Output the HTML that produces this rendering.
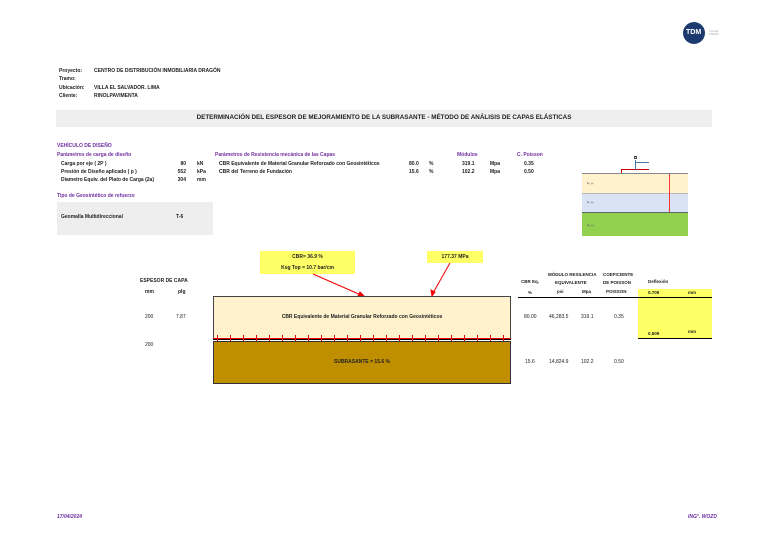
<!DOCTYPE html>
<html><head><meta charset="utf-8"><style>
*{margin:0;padding:0;box-sizing:border-box}
body{width:768px;height:543px;background:#fff;position:relative;overflow:hidden;font-family:"Liberation Sans",sans-serif;font-size:5px;color:#222}
div,span{position:absolute;white-space:nowrap}
.b{font-weight:bold}
.p{color:#7030a0;font-weight:bold}
.g{color:#555}
</style></head><body>
<div style="left:683px;top:22px;width:22px;height:22px;border-radius:50%;background:#1d3a6e"></div>
<div style="left:686px;top:29px;color:#fff;font-size:7px;font-weight:bold">TDM</div>
<div style="left:709px;top:30px;color:#aaa;font-size:2.5px">TALLER<br>DISEÑO</div>

<div class="b" style="left:59px;top:68px">Proyecto:</div>
<div class="b" style="left:94px;top:68px">CENTRO DE DISTRIBUCIÓN INMOBILIARIA DRAGÓN</div>
<div class="b" style="left:59px;top:76px">Tramo:</div>
<div class="b" style="left:59px;top:85px">Ubicación:</div>
<div class="b" style="left:94px;top:85px">VILLA EL SALVADOR. LIMA</div>
<div class="b" style="left:59px;top:93px">Cliente:</div>
<div class="b" style="left:94px;top:93px">RINOLPAVIMENTA</div>

<div style="left:56px;top:110px;width:656px;height:17px;background:#efefef"></div>
<div class="b" style="left:56px;top:114px;width:656px;text-align:center;font-size:6.3px">DETERMINACIÓN DEL ESPESOR DE MEJORAMIENTO DE LA SUBRASANTE - MÉTODO DE ANÁLISIS DE CAPAS ELÁSTICAS</div>

<div class="p" style="left:57px;top:143px">VEHÍCULO DE DISEÑO</div>
<div class="p" style="left:57px;top:152px">Parámetros de carga de diseño</div>
<div class="b" style="left:61px;top:161px">Carga por eje ( 2P )</div>
<div class="b" style="left:61px;top:169px">Presión de Diseño aplicado ( p )</div>
<div class="b" style="left:61px;top:177px">Diametro Equiv. del Plato de Carga (2a)</div>
<div class="b" style="left:170px;top:161px;width:16px;text-align:right">80</div>
<div class="b" style="left:170px;top:169px;width:16px;text-align:right">552</div>
<div class="b" style="left:170px;top:177px;width:16px;text-align:right">304</div>
<div class="b" style="left:197px;top:161px">kN</div>
<div class="b" style="left:197px;top:169px">kPa</div>
<div class="b" style="left:197px;top:177px">mm</div>
<div class="p" style="left:57px;top:193px">Tipo de Geosintético de refuerzo</div>
<div style="left:57px;top:202px;width:156px;height:33px;background:#eeeeee"></div>
<div class="b" style="left:61px;top:214px">Geomalla Multidireccional</div>
<div class="b" style="left:176px;top:214px">T-6</div>

<div class="p" style="left:215px;top:152px">Parámetros de Resistencia mecánica de las Capas</div>
<div class="b" style="left:219px;top:161px">CBR Equivalente de Material Granular Reforzado con Geosintéticos</div>
<div class="b" style="left:219px;top:169px">CBR del Terreno de Fundación</div>
<div class="b" style="left:409px;top:161px">80.0</div><div class="b" style="left:429px;top:161px">%</div>
<div class="b" style="left:409px;top:169px">15.6</div><div class="b" style="left:429px;top:169px">%</div>
<div class="p" style="left:457px;top:152px">Módulos</div>
<div class="b" style="left:462px;top:161px">319.1</div><div class="b" style="left:490px;top:161px">Mpa</div>
<div class="b" style="left:462px;top:169px">102.2</div><div class="b" style="left:490px;top:169px">Mpa</div>
<div class="p" style="left:517px;top:152px">C. Poisson</div>
<div class="b" style="left:524px;top:161px">0.35</div>
<div class="b" style="left:524px;top:169px">0.50</div>

<div style="left:582px;top:173px;width:106px;height:1px;background:#888"></div>
<div style="left:582px;top:174px;width:106px;height:19px;background:#fff2cc"></div>
<div style="left:582px;top:193px;width:106px;height:1px;background:#bbb"></div>
<div style="left:582px;top:194px;width:106px;height:18px;background:#dae3f3"></div>
<div style="left:582px;top:212px;width:106px;height:1px;background:#666"></div>
<div style="left:582px;top:213px;width:106px;height:23px;background:#92d050"></div>
<div style="left:621px;top:169px;width:28px;height:4px;border-top:1px solid #c00;border-left:1px dashed #c00"></div>
<div style="left:634px;top:156px;width:3px;height:3px;border:1px solid #444"></div>
<div style="left:635px;top:160px;width:1px;height:10px;background:#47a"></div>
<div style="left:636px;top:162px;width:13px;height:1px;background:#47a"></div>
<div style="left:669px;top:174px;width:1px;height:38px;background:#f33"></div>
<div class="g" style="left:587px;top:181px;font-size:3px">E₁ μ₁</div>
<div class="g" style="left:587px;top:200px;font-size:3px">E₂ μ₂</div>
<div class="g" style="left:587px;top:223px;font-size:3px">E₃ μ₃</div>

<div style="left:260px;top:251px;width:95px;height:23px;background:#ffff66"></div>
<div class="b" style="left:260px;top:254px;width:95px;text-align:center">CBR= 36.9 %</div>
<div class="b" style="left:260px;top:265px;width:95px;text-align:center">Ksg Top = 10.7 bar/cm</div>
<div style="left:427px;top:251px;width:56px;height:12px;background:#ffff66"></div>
<div class="b" style="left:427px;top:254px;width:56px;text-align:center">177.37 MPa</div>
<svg style="position:absolute;left:0;top:0" width="768" height="543">
<g stroke="#e00" stroke-width="1" fill="#e00">
<line x1="313" y1="274" x2="361" y2="295"/><polygon points="364,296 358,296 360,292"/>
<line x1="450" y1="263" x2="433" y2="293"/><polygon points="432,296 431,290 435,292"/>
</g>
</svg>

<div class="b" style="left:140px;top:278px">ESPESOR DE CAPA</div>
<div class="b" style="left:145px;top:289px">mm</div>
<div class="b" style="left:178px;top:289px">plg</div>
<div style="left:145px;top:314px">200</div>
<div style="left:176px;top:314px">7.87</div>
<div style="left:145px;top:342px">200</div>

<div style="left:213px;top:296px;width:298px;height:43px;background:#fff2cc;border:1px solid #444"></div>
<div class="b" style="left:213px;top:314px;width:298px;text-align:center">CBR Equivalente de Material Granular Reforzado con Geosintéticos</div>
<div style="left:213px;top:338px;width:298px;height:2px;background:#e00;border-bottom:1px solid #000"></div>
<div style="left:214px;top:335px;width:297px;height:8px;background:repeating-linear-gradient(90deg,transparent 0 3px,#e00 3px 4px,transparent 4px 13px)"></div>
<div style="left:213px;top:341px;width:298px;height:43px;background:#bf8f00;border:1px solid #333"></div>
<div class="b" style="left:213px;top:359px;width:298px;text-align:center">SUBRASANTE = 15.6 %</div>

<div class="b" style="left:521px;top:279px;font-size:4.5px">CBR Eq.</div>
<div class="b" style="left:528px;top:290px;font-size:4.5px">%</div>
<div class="b" style="left:548px;top:272px;font-size:4.5px">MÓDULO RESILENCIA</div>
<div class="b" style="left:555px;top:280px;font-size:4.5px">EQUIVALENTE</div>
<div class="b" style="left:557px;top:289px;font-size:4.5px">psi</div>
<div class="b" style="left:582px;top:289px;font-size:4.5px">Mpa</div>
<div class="b" style="left:603px;top:272px;font-size:4.5px">COEFICIENTE</div>
<div class="b" style="left:603px;top:280px;font-size:4.5px">DE POISSON</div>
<div class="b" style="left:606px;top:289px;font-size:4.5px">POISSON</div>
<div class="b" style="left:648px;top:279px;font-size:4.5px">Deflexión</div>
<div style="left:638px;top:289px;width:74px;height:49px;background:#ffff66"></div>
<div class="b" style="left:648px;top:290px;font-size:4.5px">0.709</div>
<div class="b" style="left:688px;top:290px;font-size:4.5px">mm</div>
<div style="left:518px;top:297px;width:194px;height:1px;background:#000"></div>
<div class="b" style="left:648px;top:331px;font-size:4.5px">0.509</div>
<div class="b" style="left:688px;top:329px;font-size:4.5px">mm</div>
<div style="left:638px;top:338px;width:74px;height:1px;background:#000"></div>
<div style="left:524px;top:314px">80.00</div><div style="left:549px;top:314px">46,283.5</div><div style="left:581px;top:314px">319.1</div><div style="left:614px;top:314px">0.35</div>
<div style="left:525px;top:359px">15.6</div><div style="left:549px;top:359px">14,824.9</div><div style="left:581px;top:359px">102.2</div><div style="left:614px;top:359px">0.50</div>

<div style="left:57px;top:514px;color:#7030a0;font-style:italic;font-weight:bold">17/04/2024</div>
<div style="left:688px;top:514px;color:#7030a0;font-style:italic;font-weight:bold">ING°. WOZD</div>
</body></html>
